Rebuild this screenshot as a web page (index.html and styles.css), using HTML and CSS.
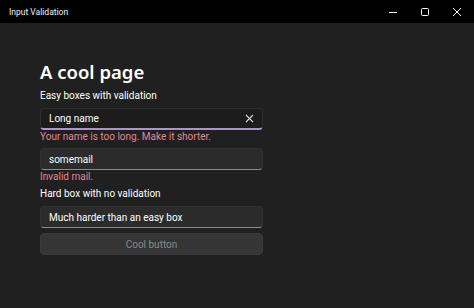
FILE: index.html
```html
<!DOCTYPE html>
<html lang="en">
<head>
    <meta charset="UTF-8">
    <meta name="viewport" content="width=device-width, initial-scale=1.0">
    <title>Input Validation</title>
    <link rel="stylesheet" href="styles.css">
</head>
<body>
    <div class="titlebar">
        <span class="title">Input Validation</span>
        <div class="caption-buttons">
            <span class="caption-btn">
                <svg width="10" height="10" viewBox="0 0 10 10"><path d="M1 5.5h8" stroke="#fff" stroke-width="1"/></svg>
            </span>
            <span class="caption-btn">
                <svg width="10" height="10" viewBox="0 0 10 10"><rect x="1.5" y="1.5" width="7" height="7" rx="1" fill="none" stroke="#fff" stroke-width="1"/></svg>
            </span>
            <span class="caption-btn">
                <svg width="10" height="10" viewBox="0 0 10 10"><path d="M1 1l8 8M9 1l-8 8" stroke="#fff" stroke-width="1"/></svg>
            </span>
        </div>
    </div>

    <div class="container">
        <h1>A cool page</h1>
        <div class="label">Easy boxes with validation</div>

        <div class="textbox focused">
            <span>Long name</span>
            <svg class="clear" width="9" height="9" viewBox="0 0 9 9"><path d="M1 1l7 7M8 1l-7 7" stroke="#d0d0d0" stroke-width="1.1"/></svg>
        </div>
        <div class="error">Your name is too long. Make it shorter.</div>

        <div class="textbox">
            <span>somemail</span>
        </div>
        <div class="error">Invalid mail.</div>

        <div class="label second">Hard box with no validation</div>
        <div class="textbox">
            <span>Much harder than an easy box</span>
        </div>

        <div class="button">Cool button</div>
    </div>
</body>
</html>
```

FILE: styles.css
```css
body {
    margin: 0;
    padding: 0;
    background-color: #202020;
    font-family: "Segoe UI", Roboto, sans-serif;
    color: #ffffff;
    height: 308px;
    overflow: hidden;
}
.titlebar {
    height: 23px;
    background-color: #000;
    display: flex;
    align-items: center;
    justify-content: space-between;
}
.title {
    font-size: 8.5px;
    padding-left: 9px;
    color: #f0f0f0;
}
.caption-buttons {
    display: flex;
    height: 100%;
    padding-right: 1px;
}
.caption-btn {
    width: 32px;
    display: flex;
    align-items: center;
    justify-content: center;
}
.container {
    padding: 36px 0 0 40px;
    width: 223px;
}
h1 {
    font-family: "Segoe UI", "Noto Sans", sans-serif;
    font-size: 18.5px;
    line-height: 26px;
    font-weight: 600;
    margin: 0 0 3px 0;
}
.label {
    font-size: 10px;
    line-height: 16px;
}
.label.second {
    margin-top: 2px;
}
.textbox {
    box-sizing: border-box;
    height: 22px;
    margin-top: 4px;
    background-color: #2b2b2b;
    border: 1px solid #303030;
    border-bottom: 1px solid #8c8c8c;
    border-radius: 4px;
    display: flex;
    align-items: center;
    justify-content: space-between;
    padding: 0 8px 0 8px;
    font-size: 10px;
}
.textbox.focused {
    background-color: #1c1c1c;
    border-color: #2e2e2e;
    border-bottom: 2px solid #a995c8;
}
.clear {
    margin-right: 0;
}
.error {
    font-size: 10px;
    line-height: 14px;
    color: #e08695;
}
.button {
    box-sizing: border-box;
    height: 22px;
    margin-top: 5px;
    background-color: #353535;
    border-radius: 4px;
    border: 1px solid #3a3a3a;
    color: #8a8a8a;
    font-size: 10px;
    display: flex;
    align-items: center;
    justify-content: center;
}
```
